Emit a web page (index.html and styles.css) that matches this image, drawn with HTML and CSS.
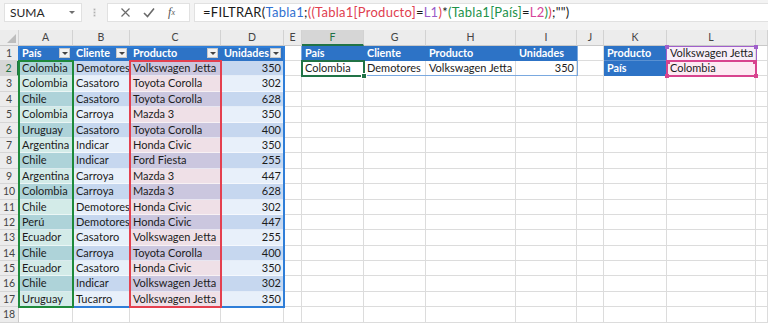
FILE: index.html
```html
<!DOCTYPE html>
<html lang="es">
<head>
<meta charset="utf-8">
<title>Excel FILTRAR</title>
<link rel="stylesheet" href="styles.css">
</head>
<body>
<div class="bar">
  <div class="namebox"><span>SUMA</span><span class="caret"></span></div>
  <div class="dots"><span></span><span></span><span></span></div>
  <div class="btns">
    <span class="btn">
      <svg width="11" height="11" viewBox="0 0 11 11"><path d="M1.5 1.5 L9.5 9.5 M9.5 1.5 L1.5 9.5" stroke="#6a6a6a" stroke-width="1.2" fill="none"/></svg>
    </span>
    <span class="btn">
      <svg width="12" height="11" viewBox="0 0 12 11"><path d="M1 6 L4.5 9.5 L11 1.5" stroke="#6a6a6a" stroke-width="1.6" fill="none"/></svg>
    </span>
    <span class="btn fx">f<sub>x</sub></span>
  </div>
  <div class="formula">=FILTRAR(<span class="fb">Tabla1</span>;<span class="fr">((Tabla1[Producto]</span>=<span class="fp">L1</span><span class="fr">)</span>*<span class="fg">(Tabla1[País]</span>=<span class="fm">L2</span><span class="fg">)</span><span class="fr">)</span>;"")</div>
</div>

<div class="sheet">
  <div class="cells">
    <div class="ch corner"><span class="tri"></span></div>
    <div class="ch">A</div><div class="ch">B</div><div class="ch">C</div><div class="ch">D</div><div class="ch">E</div>
    <div class="ch selc">F</div><div class="ch">G</div><div class="ch">H</div><div class="ch">I</div><div class="ch">J</div>
    <div class="ch">K</div><div class="ch">L</div><div class="ch"></div>

    <div class="rh">1</div>
    <div class="c th hd"><span>País</span><span class="dd"></span></div>
    <div class="c th hd"><span>Cliente</span><span class="dd"></span></div>
    <div class="c th hd"><span>Producto</span><span class="dd"></span></div>
    <div class="c th hd"><span>Unidades</span><span class="dd"></span></div>
    <div class="c"></div>
    <div class="c th">País</div><div class="c th">Cliente</div><div class="c th">Producto</div><div class="c th">Unidades</div>
    <div class="c"></div>
    <div class="c th kt">Producto</div>
    <div class="c l1">Volkswagen Jetta</div>
    <div class="c"></div>

    <div class="rh selr">2</div>
    <div class="c a e">Colombia</div><div class="c b e">Demotores</div><div class="c k e">Volkswagen Jetta</div><div class="c d e n">350</div>
    <div class="c"></div>
    <div class="c">Colombia</div><div class="c">Demotores</div><div class="c">Volkswagen Jetta</div><div class="c n">350</div>
    <div class="c"></div>
    <div class="c th">País</div>
    <div class="c l2">Colombia</div>
    <div class="c"></div>

    <div class="rh">3</div>
    <div class="c a o">Colombia</div><div class="c b o">Casatoro</div><div class="c k o">Toyota Corolla</div><div class="c d o n">302</div>
    <div class="c"></div><div class="c"></div><div class="c"></div><div class="c"></div><div class="c"></div><div class="c"></div><div class="c"></div><div class="c"></div><div class="c"></div>

    <div class="rh">4</div>
    <div class="c a e">Chile</div><div class="c b e">Casatoro</div><div class="c k e">Toyota Corolla</div><div class="c d e n">628</div>
    <div class="c"></div><div class="c"></div><div class="c"></div><div class="c"></div><div class="c"></div><div class="c"></div><div class="c"></div><div class="c"></div><div class="c"></div>

    <div class="rh">5</div>
    <div class="c a o">Colombia</div><div class="c b o">Carroya</div><div class="c k o">Mazda 3</div><div class="c d o n">350</div>
    <div class="c"></div><div class="c"></div><div class="c"></div><div class="c"></div><div class="c"></div><div class="c"></div><div class="c"></div><div class="c"></div><div class="c"></div>

    <div class="rh">6</div>
    <div class="c a e">Uruguay</div><div class="c b e">Casatoro</div><div class="c k e">Toyota Corolla</div><div class="c d e n">400</div>
    <div class="c"></div><div class="c"></div><div class="c"></div><div class="c"></div><div class="c"></div><div class="c"></div><div class="c"></div><div class="c"></div><div class="c"></div>

    <div class="rh">7</div>
    <div class="c a o">Argentina</div><div class="c b o">Indicar</div><div class="c k o">Honda Civic</div><div class="c d o n">350</div>
    <div class="c"></div><div class="c"></div><div class="c"></div><div class="c"></div><div class="c"></div><div class="c"></div><div class="c"></div><div class="c"></div><div class="c"></div>

    <div class="rh">8</div>
    <div class="c a e">Chile</div><div class="c b e">Indicar</div><div class="c k e">Ford Fiesta</div><div class="c d e n">255</div>
    <div class="c"></div><div class="c"></div><div class="c"></div><div class="c"></div><div class="c"></div><div class="c"></div><div class="c"></div><div class="c"></div><div class="c"></div>

    <div class="rh">9</div>
    <div class="c a o">Argentina</div><div class="c b o">Carroya</div><div class="c k o">Mazda 3</div><div class="c d o n">447</div>
    <div class="c"></div><div class="c"></div><div class="c"></div><div class="c"></div><div class="c"></div><div class="c"></div><div class="c"></div><div class="c"></div><div class="c"></div>

    <div class="rh">10</div>
    <div class="c a e">Colombia</div><div class="c b e">Carroya</div><div class="c k e">Mazda 3</div><div class="c d e n">628</div>
    <div class="c"></div><div class="c"></div><div class="c"></div><div class="c"></div><div class="c"></div><div class="c"></div><div class="c"></div><div class="c"></div><div class="c"></div>

    <div class="rh">11</div>
    <div class="c a o">Chile</div><div class="c b o">Demotores</div><div class="c k o">Honda Civic</div><div class="c d o n">302</div>
    <div class="c"></div><div class="c"></div><div class="c"></div><div class="c"></div><div class="c"></div><div class="c"></div><div class="c"></div><div class="c"></div><div class="c"></div>

    <div class="rh">12</div>
    <div class="c a e">Perú</div><div class="c b e">Demotores</div><div class="c k e">Honda Civic</div><div class="c d e n">447</div>
    <div class="c"></div><div class="c"></div><div class="c"></div><div class="c"></div><div class="c"></div><div class="c"></div><div class="c"></div><div class="c"></div><div class="c"></div>

    <div class="rh">13</div>
    <div class="c a o">Ecuador</div><div class="c b o">Casatoro</div><div class="c k o">Volkswagen Jetta</div><div class="c d o n">255</div>
    <div class="c"></div><div class="c"></div><div class="c"></div><div class="c"></div><div class="c"></div><div class="c"></div><div class="c"></div><div class="c"></div><div class="c"></div>

    <div class="rh">14</div>
    <div class="c a e">Chile</div><div class="c b e">Carroya</div><div class="c k e">Toyota Corolla</div><div class="c d e n">400</div>
    <div class="c"></div><div class="c"></div><div class="c"></div><div class="c"></div><div class="c"></div><div class="c"></div><div class="c"></div><div class="c"></div><div class="c"></div>

    <div class="rh">15</div>
    <div class="c a o">Ecuador</div><div class="c b o">Casatoro</div><div class="c k o">Honda Civic</div><div class="c d o n">350</div>
    <div class="c"></div><div class="c"></div><div class="c"></div><div class="c"></div><div class="c"></div><div class="c"></div><div class="c"></div><div class="c"></div><div class="c"></div>

    <div class="rh">16</div>
    <div class="c a e">Chile</div><div class="c b e">Indicar</div><div class="c k e">Volkswagen Jetta</div><div class="c d e n">302</div>
    <div class="c"></div><div class="c"></div><div class="c"></div><div class="c"></div><div class="c"></div><div class="c"></div><div class="c"></div><div class="c"></div><div class="c"></div>

    <div class="rh">17</div>
    <div class="c a o">Uruguay</div><div class="c b o">Tucarro</div><div class="c k o">Volkswagen Jetta</div><div class="c d o n">350</div>
    <div class="c"></div><div class="c"></div><div class="c"></div><div class="c"></div><div class="c"></div><div class="c"></div><div class="c"></div><div class="c"></div><div class="c"></div>

    <div class="rh">18</div>
    <div class="c"></div><div class="c"></div><div class="c"></div><div class="c"></div><div class="c"></div><div class="c"></div><div class="c"></div><div class="c"></div><div class="c"></div><div class="c"></div><div class="c"></div><div class="c"></div><div class="c"></div>
  </div>

  <div class="over">
    <div class="box hl-tbl"></div>
    <div class="box hl-a"></div>
    <div class="box hl-c"></div>
    <div class="box spill"></div>
    <div class="box sel"><span class="grip"></span></div>
    <div class="box ref1"><span class="q tl"></span><span class="q tr"></span></div>
    <div class="box ref2"><span class="q tl"></span><span class="q tr"></span><span class="q bl"></span><span class="q br"></span></div>
  </div>
</div>
</body>
</html>
```

FILE: styles.css
```css
* { box-sizing: border-box; margin: 0; padding: 0; }

body {
  margin: 0;
  width: 768px;
  height: 324px;
  overflow: hidden;
  background: #fff;
  font-family: Lato, "Liberation Sans", sans-serif;
  color: #1a1a1a;
}

/* ---------- formula bar ---------- */
.bar {
  height: 30px;
  background: #f3f3f3;
  display: flex;
  align-items: flex-start;
  padding: 3px 0 0 4px;
}

.namebox {
  width: 78px;
  height: 19px;
  background: #fff;
  border: 1px solid #e1e1e1;
  display: flex;
  align-items: center;
  justify-content: space-between;
  padding: 0 6px 0 5px;
  font-size: 12px;
  color: #262626;
}

.caret {
  width: 0;
  height: 0;
  border-left: 3px solid transparent;
  border-right: 3px solid transparent;
  border-top: 3px solid #6f6f6f;
}

.dots {
  width: 25px;
  height: 19px;
  display: flex;
  flex-direction: column;
  align-items: center;
  justify-content: center;
  gap: 2px;
}
.dots span {
  width: 1px;
  height: 1px;
  background: #b0b0b0;
  box-shadow: 0 0 0 0.5px #c4c4c4;
}

.btns {
  width: 83px;
  height: 19px;
  background: #fff;
  border: 1px solid #e1e1e1;
  display: flex;
  align-items: center;
  justify-content: space-around;
  padding: 0 6px;
}
.btn {
  display: flex;
  align-items: center;
  justify-content: center;
  width: 18px;
  color: #6a6a6a;
}
.fx {
  font-family: "Liberation Serif", serif;
  font-style: italic;
  font-size: 12px;
  color: #555;
}
.fx sub { font-size: 8px; vertical-align: -1px; }

.formula {
  flex: 1;
  height: 19px;
  margin-left: 4px;
  background: #fff;
  border: 1px solid #e1e1e1;
  border-right: none;
  padding-left: 8px;
  font-size: 13px;
  letter-spacing: 0.25px;
  line-height: 17px;
  color: #1a1a1a;
  white-space: nowrap;
}
.fb { color: #2f6fd0; }
.fr { color: #e0404f; }
.fp { color: #9a5cc8; }
.fg { color: #21924a; }
.fm { color: #d5459a; }

/* ---------- sheet ---------- */
.sheet {
  display: grid;
}
.cells, .over {
  grid-area: 1 / 1;
  display: grid;
  grid-template-columns: 19px 54px 57px 91px 63px 18px 62px 62px 90px 61px 27px 63px 89px 12px;
  grid-template-rows: 16px 15px repeat(17, 15.4px);
}
.over { pointer-events: none; }

.ch {
  background: #ececec;
  border-right: 1px solid #d2d2d2;
  border-bottom: 1px solid #c9c9c9;
  font-size: 10.5px;
  color: #444;
  text-align: center;
  line-height: 15px;
}
.ch.selc {
  background: #d6d6d6;
  color: #1e7145;
  border-bottom: 2px solid #217346;
}
.corner {
  display: flex;
  align-items: flex-end;
  justify-content: flex-end;
  padding: 0 2px 2px 0;
}
.tri {
  width: 0;
  height: 0;
  border-left: 9px solid transparent;
  border-bottom: 9px solid #bdbdbd;
}

.rh {
  background: #ececec;
  border-right: 1px solid #c9c9c9;
  border-bottom: 1px solid #d6d6d6;
  font-size: 10.5px;
  color: #444;
  text-align: center;
  line-height: 15px;
}
.rh.selr {
  background: #d6d6d6;
  color: #1e7145;
  border-right: 2px solid #217346;
}

.c {
  border-right: 1px solid #dcdcdc;
  border-bottom: 1px solid #dcdcdc;
  font-size: 11px;
  line-height: 14px;
  padding: 0 2px 0 3px;
  white-space: nowrap;
  overflow: hidden;
  color: #1c1c1c;
}
.n { text-align: right; }

.th {
  background: #2d73c6;
  color: #fff;
  font-weight: bold;
  font-size: 10.8px;
  border-right-color: #2d73c6;
  border-bottom-color: #2d73c6;
}
.th.kt { border-bottom-color: #5a91d2; }
.hd {
  display: flex;
  align-items: center;
  justify-content: space-between;
  padding-right: 2px;
}
.dd {
  flex: none;
  width: 11px;
  height: 10px;
  background: #f2f2f2;
  border: 1px solid #c8c8c8;
  display: flex;
  align-items: center;
  justify-content: center;
}
.dd::after {
  content: "";
  width: 0;
  height: 0;
  border-left: 3px solid transparent;
  border-right: 3px solid transparent;
  border-top: 3px solid #444;
}

/* table banding (with reference tints) */
.a, .b, .k, .d {
  border-right-color: rgba(255,255,255,0.6);
  border-bottom-color: rgba(255,255,255,0.55);
}
.a.e { background: #aed3d9; }
.a.o { background: #d3ebe8; }
.b.e, .d.e { background: #c6d7ef; }
.b.o, .d.o { background: #e8f0fa; }
.k.e { background: #cbc7df; }
.k.o { background: #efe0e7; }

.l1 { background: #f8eef9; }
.l2 { background: #fdeaf3; }

/* ---------- overlays ---------- */
.box { position: relative; }
.hl-tbl {
  grid-column: 2 / 6;
  grid-row: 2 / 19;
  border: 2px solid #2f7ed8;
  margin: 0 -1px -1px -1px;
}
.hl-a {
  grid-column: 2 / 3;
  grid-row: 3 / 19;
  border: 2px solid #1e8a3b;
  margin: -1px -1px -1px -1px;
}
.hl-c {
  grid-column: 4 / 5;
  grid-row: 3 / 19;
  border: 2px solid #e4404f;
  margin: -1px -1px -1px -1px;
}
.spill {
  grid-column: 7 / 11;
  grid-row: 2 / 4;
  border: 1px solid #7aa9e0;
  border-top: none;
  margin: 0 -1px 0 -1px;
}
.sel {
  grid-column: 7 / 8;
  grid-row: 3 / 4;
  border: 2px solid #217346;
  margin: -1px -1px -1px -1px;
}
.grip {
  position: absolute;
  right: -4px;
  bottom: -4px;
  width: 6px;
  height: 6px;
  background: #217346;
  border: 1px solid #fff;
}
.ref1 {
  grid-column: 13 / 14;
  grid-row: 2 / 3;
  border: 1px solid #a05fcb;
  margin: 0 -1px 0 -1px;
}
.ref2 {
  grid-column: 13 / 14;
  grid-row: 3 / 4;
  border: 2px solid #d8448f;
  margin: -1px -1px -1px -1px;
}
.q {
  position: absolute;
  width: 4px;
  height: 4px;
  background: #d8448f;
}
.ref1 .q { background: #a05fcb; }
.q.tl { left: -2px; top: -2px; }
.q.tr { right: -2px; top: -2px; }
.q.bl { left: -3px; bottom: -3px; }
.q.br { right: -3px; bottom: -3px; }
```
